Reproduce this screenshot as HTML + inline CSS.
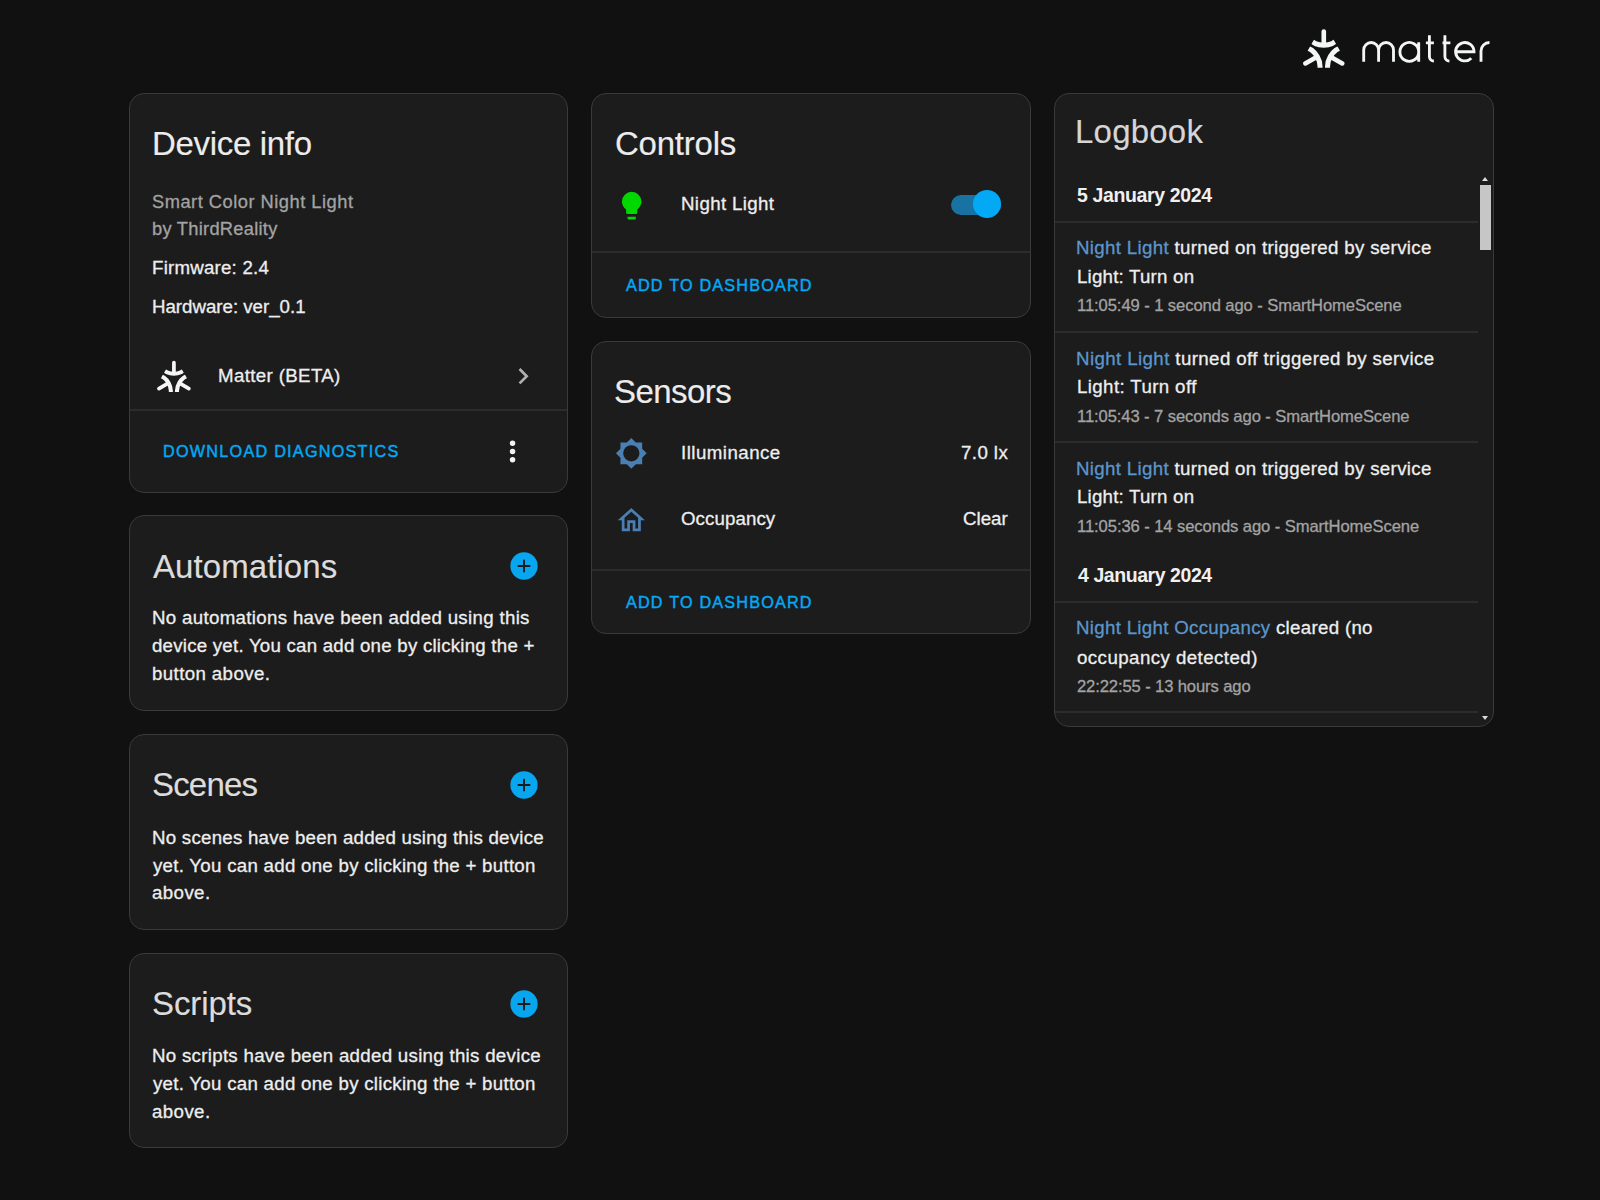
<!DOCTYPE html>
<html><head><meta charset="utf-8"><style>
html,body{margin:0;padding:0;width:1600px;height:1200px;overflow:hidden;background:#111111;}
body{position:relative;font-family:"Liberation Sans",sans-serif;}
.card{position:absolute;box-sizing:border-box;background:#1c1c1c;border:1px solid #3a3a3a;border-radius:15px;}
.t{position:absolute;white-space:nowrap;line-height:1;}
</style></head><body>
<div class="card" style="left:129px;top:93px;width:439px;height:400px"></div>
<div class="card" style="left:129px;top:515px;width:439px;height:196px"></div>
<div class="card" style="left:129px;top:734px;width:439px;height:196px"></div>
<div class="card" style="left:129px;top:953px;width:439px;height:195px"></div>
<div class="card" style="left:591px;top:93px;width:440px;height:225px"></div>
<div class="card" style="left:591px;top:341px;width:440px;height:293px"></div>
<div class="card" style="left:1054px;top:93px;width:440px;height:634px"></div>
<div style="position:absolute;left:130.0px;top:409.0px;width:437.0px;height:2px;background:#2c2c2c"></div>
<div style="position:absolute;left:592.0px;top:251.0px;width:438.0px;height:2px;background:#2c2c2c"></div>
<div style="position:absolute;left:592.0px;top:568.5px;width:438.0px;height:2px;background:#2c2c2c"></div>
<div style="position:absolute;left:1055.0px;top:221.0px;width:423.0px;height:2px;background:#2c2c2c"></div>
<div style="position:absolute;left:1055.0px;top:331.0px;width:423.0px;height:2px;background:#2c2c2c"></div>
<div style="position:absolute;left:1055.0px;top:441.0px;width:423.0px;height:2px;background:#2c2c2c"></div>
<div style="position:absolute;left:1055.0px;top:600.8px;width:423.0px;height:2px;background:#2c2c2c"></div>
<div style="position:absolute;left:1055.0px;top:710.5px;width:423.0px;height:2px;background:#2c2c2c"></div>
<div style="position:absolute;left:1480px;top:185px;width:11px;height:65px;background:#c6c6c6"></div>
<div style="position:absolute;left:1482px;top:176.5px;width:0;height:0;border-left:3px solid transparent;border-right:3px solid transparent;border-bottom:4px solid #dcdcdc"></div>
<div style="position:absolute;left:1482px;top:716px;width:0;height:0;border-left:3px solid transparent;border-right:3px solid transparent;border-top:4px solid #dcdcdc"></div>
<svg style="position:absolute;left:614.72px;top:189.07px;width:33.36px;height:33.36px" viewBox="0 0 24 24"><path fill="#00d800" fill-rule="evenodd" d="M12,2A7,7 0 0,0 5,9C5,11.38 6.19,13.47 8,14.74V17A1,1 0 0,0 9,18H15A1,1 0 0,0 16,17V14.74C17.81,13.47 19,11.38 19,9A7,7 0 0,0 12,2M9,21A1,1 0 0,0 10,22H14A1,1 0 0,0 15,21V20H9V21Z"/></svg>
<svg style="position:absolute;left:615.08px;top:437.38px;width:32.64px;height:32.64px" viewBox="0 0 24 24"><path fill="#4a7fb3" fill-rule="evenodd" d="M20,8.69V4H15.31L12,0.69L8.69,4H4V8.69L0.69,12L4,15.31V20H8.69L12,23.31L15.31,20H20V15.31L23.31,12L20,8.69ZM12,18A6,6 0 0,1 6,12A6,6 0 0,1 12,6A6,6 0 0,1 18,12A6,6 0 0,1 12,18Z"/></svg>
<svg style="position:absolute;left:614.93px;top:504.11px;width:32.64px;height:32.64px" viewBox="0 0 24 24"><path fill="#4a7fb3" fill-rule="evenodd" d="M12 5.69L17 10.19V18H15V12H9V18H7V10.19L12 5.69M12 3L2 12H5V20H11V14H13V20H19V12H22L12 3Z"/></svg>
<svg style="position:absolute;left:508.60px;top:550.50px;width:30px;height:30px" viewBox="-15 -15 30 30"><circle r="13.65" fill="#07a6ee"/><path d="M-5.6,0 H5.6 M0,-5.6 V5.6" stroke="#1c1c1c" stroke-width="1.9" stroke-linecap="round"/></svg>
<svg style="position:absolute;left:508.60px;top:769.80px;width:30px;height:30px" viewBox="-15 -15 30 30"><circle r="13.65" fill="#07a6ee"/><path d="M-5.6,0 H5.6 M0,-5.6 V5.6" stroke="#1c1c1c" stroke-width="1.9" stroke-linecap="round"/></svg>
<svg style="position:absolute;left:508.60px;top:988.50px;width:30px;height:30px" viewBox="-15 -15 30 30"><circle r="13.65" fill="#07a6ee"/><path d="M-5.6,0 H5.6 M0,-5.6 V5.6" stroke="#1c1c1c" stroke-width="1.9" stroke-linecap="round"/></svg>
<svg style="position:absolute;left:495.94px;top:434.64px;width:33.12px;height:33.12px" viewBox="0 0 24 24"><path fill="#f2f2f2" fill-rule="evenodd" d="M12,16A2,2 0 0,1 14,18A2,2 0 0,1 12,20A2,2 0 0,1 10,18A2,2 0 0,1 12,16M12,10A2,2 0 0,1 14,12A2,2 0 0,1 12,14A2,2 0 0,1 10,12A2,2 0 0,1 12,10M12,4A2,2 0 0,1 14,6A2,2 0 0,1 12,8A2,2 0 0,1 10,6A2,2 0 0,1 12,4Z"/></svg>
<svg style="position:absolute;left:507.00px;top:360.00px;width:32.40px;height:32.40px" viewBox="0 0 24 24"><path fill="#b0b0b0" fill-rule="evenodd" d="M8.59,16.58L13.17,12L8.59,7.41L10,6L16,12L10,18L8.59,16.58Z"/></svg>
<div style="position:absolute;left:950.5px;top:194.5px;width:50px;height:20px;border-radius:10px;background:#1873a3"></div>
<div style="position:absolute;left:973px;top:190px;width:28px;height:28px;border-radius:14px;background:#03a9f4"></div>
<svg style="position:absolute;left:1292.72px;top:21.52px;width:61.57px;height:61.57px;overflow:visible" viewBox="-30 -30 60 60"><defs><clipPath id="mca" clipPathUnits="userSpaceOnUse"><path d="M-16.9,0 L0,-29.2 L16.9,0 Z"/></clipPath></defs><g fill="none" stroke="#f4f6f6"><g transform="rotate(0)"><path d="M0,-20.8 V-9" stroke-width="4.5" stroke-linecap="round"/><path clip-path="url(#mca)" d="M-15,-14.3 A19.65,19.65 0 0 0 15,-14.3" stroke-width="4.9"/></g><g transform="rotate(120)"><path d="M0,-20.8 V-9" stroke-width="4.5" stroke-linecap="round"/><path clip-path="url(#mca)" d="M-15,-14.3 A19.65,19.65 0 0 0 15,-14.3" stroke-width="4.9"/></g><g transform="rotate(240)"><path d="M0,-20.8 V-9" stroke-width="4.5" stroke-linecap="round"/><path clip-path="url(#mca)" d="M-15,-14.3 A19.65,19.65 0 0 0 15,-14.3" stroke-width="4.9"/></g></g></svg>
<svg style="position:absolute;left:149.09px;top:354.99px;width:49.83px;height:49.83px;overflow:visible" viewBox="-30 -30 60 60"><defs><clipPath id="mcb" clipPathUnits="userSpaceOnUse"><path d="M-16.9,0 L0,-29.2 L16.9,0 Z"/></clipPath></defs><g fill="none" stroke="#f4f6f6"><g transform="rotate(0)"><path d="M0,-20.8 V-9" stroke-width="4.5" stroke-linecap="round"/><path clip-path="url(#mcb)" d="M-15,-14.3 A19.65,19.65 0 0 0 15,-14.3" stroke-width="4.9"/></g><g transform="rotate(120)"><path d="M0,-20.8 V-9" stroke-width="4.5" stroke-linecap="round"/><path clip-path="url(#mcb)" d="M-15,-14.3 A19.65,19.65 0 0 0 15,-14.3" stroke-width="4.9"/></g><g transform="rotate(240)"><path d="M0,-20.8 V-9" stroke-width="4.5" stroke-linecap="round"/><path clip-path="url(#mcb)" d="M-15,-14.3 A19.65,19.65 0 0 0 15,-14.3" stroke-width="4.9"/></g></g></svg>
<svg style="position:absolute;left:0;top:0;width:1600px;height:100px;overflow:visible" viewBox="0 0 1600 100"><path d="M1363.7,61.8 V50 A7.45,7.45 0 0 1 1378.6,50 V61.8 M1378.6,50 A7.45,7.45 0 0 1 1393.5,50 V61.8 M1418.7,42.3 V61.8 M1418.7,51.9 A9.4,9.4 0 1 0 1418.7,51.95 M1429.4,35.3 V56.5 A4.5,4.5 0 0 0 1433.9,61 M1425.9,42.9 H1433.9 M1444.9,35.3 V56.5 A4.5,4.5 0 0 0 1449.4,61 M1442.5,42.9 H1450.4 M1455.6,51.7 H1474 A9.2,9.2 0 1 0 1471.3,58.2 M1481,61.8 V51 A8.5,8.5 0 0 1 1489.5,42.5" fill="none" stroke="#f4f6f6" stroke-width="2.85"/></svg>
<div id="t_devinfo" class="t" style="left:152.00px;top:126.52px;font-size:33.00px;letter-spacing:-0.320px;color:#ececec;-webkit-text-stroke:0.15px;">Device info</div>
<div id="t_model1" class="t" style="left:152.00px;top:193.06px;font-size:18.30px;letter-spacing:0.500px;color:#a3a3a3;-webkit-text-stroke:0.30px;">Smart Color Night Light</div>
<div id="t_model2" class="t" style="left:152.00px;top:220.06px;font-size:18.30px;letter-spacing:0.268px;color:#a3a3a3;-webkit-text-stroke:0.30px;">by ThirdReality</div>
<div id="t_fw" class="t" style="left:152.00px;top:259.07px;font-size:18.70px;letter-spacing:0.217px;color:#eeeeee;-webkit-text-stroke:0.30px;">Firmware: 2.4</div>
<div id="t_hw" class="t" style="left:152.00px;top:297.67px;font-size:18.70px;letter-spacing:-0.012px;color:#eeeeee;-webkit-text-stroke:0.30px;">Hardware: ver_0.1</div>
<div id="t_matter" class="t" style="left:218.00px;top:367.17px;font-size:18.70px;letter-spacing:0.358px;color:#eeeeee;-webkit-text-stroke:0.30px;">Matter (BETA)</div>
<div id="t_dl" class="t" style="left:163.00px;top:443.09px;font-size:16.20px;letter-spacing:1.258px;color:#03a9f4;-webkit-text-stroke:0.45px #03a9f4;">DOWNLOAD DIAGNOSTICS</div>
<div id="t_auto" class="t" style="left:153.00px;top:549.57px;font-size:33.00px;letter-spacing:0.070px;color:#dcdcdc;-webkit-text-stroke:0.15px;">Automations</div>
<div id="t_auto1" class="t" style="left:152.00px;top:608.67px;font-size:18.70px;letter-spacing:0.320px;color:#eeeeee;-webkit-text-stroke:0.30px;">No automations have been added using this</div>
<div id="t_auto2" class="t" style="left:152.00px;top:637.47px;font-size:18.70px;letter-spacing:0.225px;color:#eeeeee;-webkit-text-stroke:0.30px;">device yet. You can add one by clicking the +</div>
<div id="t_auto3" class="t" style="left:152.00px;top:664.77px;font-size:18.70px;letter-spacing:0.383px;color:#eeeeee;-webkit-text-stroke:0.30px;">button above.</div>
<div id="t_scenes" class="t" style="left:152.00px;top:767.77px;font-size:33.00px;letter-spacing:-0.820px;color:#dcdcdc;-webkit-text-stroke:0.15px;">Scenes</div>
<div id="t_sc1" class="t" style="left:152.00px;top:828.77px;font-size:18.70px;letter-spacing:0.248px;color:#eeeeee;-webkit-text-stroke:0.30px;">No scenes have been added using this device</div>
<div id="t_sc2" class="t" style="left:153.00px;top:857.07px;font-size:18.70px;letter-spacing:0.273px;color:#eeeeee;-webkit-text-stroke:0.30px;">yet. You can add one by clicking the + button</div>
<div id="t_sc3" class="t" style="left:152.00px;top:884.47px;font-size:18.70px;letter-spacing:0.400px;color:#eeeeee;-webkit-text-stroke:0.30px;">above.</div>
<div id="t_scripts" class="t" style="left:152.00px;top:987.37px;font-size:33.00px;letter-spacing:-0.100px;color:#dcdcdc;-webkit-text-stroke:0.15px;">Scripts</div>
<div id="t_sr1" class="t" style="left:152.00px;top:1047.37px;font-size:18.70px;letter-spacing:0.293px;color:#eeeeee;-webkit-text-stroke:0.30px;">No scripts have been added using this device</div>
<div id="t_sr2" class="t" style="left:153.00px;top:1075.27px;font-size:18.70px;letter-spacing:0.273px;color:#eeeeee;-webkit-text-stroke:0.30px;">yet. You can add one by clicking the + button</div>
<div id="t_sr3" class="t" style="left:152.00px;top:1102.57px;font-size:18.70px;letter-spacing:0.400px;color:#eeeeee;-webkit-text-stroke:0.30px;">above.</div>
<div id="t_controls" class="t" style="left:615.00px;top:127.47px;font-size:33.00px;letter-spacing:-0.229px;color:#ececec;-webkit-text-stroke:0.15px;">Controls</div>
<div id="t_nl" class="t" style="left:681.00px;top:195.17px;font-size:18.70px;letter-spacing:0.370px;color:#eeeeee;-webkit-text-stroke:0.30px;">Night Light</div>
<div id="t_add1" class="t" style="left:626.00px;top:277.29px;font-size:16.20px;letter-spacing:1.193px;color:#03a9f4;-webkit-text-stroke:0.45px #03a9f4;">ADD TO DASHBOARD</div>
<div id="t_sensors" class="t" style="left:614.00px;top:374.87px;font-size:33.00px;letter-spacing:-0.567px;color:#ececec;-webkit-text-stroke:0.15px;">Sensors</div>
<div id="t_illum" class="t" style="left:681.00px;top:443.67px;font-size:18.70px;letter-spacing:0.470px;color:#eeeeee;-webkit-text-stroke:0.30px;">Illuminance</div>
<div id="t_illumv" class="t" style="left:961.00px;top:443.67px;font-size:18.70px;letter-spacing:0.420px;color:#eeeeee;-webkit-text-stroke:0.30px;">7.0 lx</div>
<div id="t_occ" class="t" style="left:681.00px;top:509.67px;font-size:18.70px;letter-spacing:0.087px;color:#eeeeee;-webkit-text-stroke:0.30px;">Occupancy</div>
<div id="t_occv" class="t" style="left:963.00px;top:509.67px;font-size:18.70px;letter-spacing:0.000px;color:#eeeeee;-webkit-text-stroke:0.30px;">Clear</div>
<div id="t_add2" class="t" style="left:626.00px;top:594.29px;font-size:16.20px;letter-spacing:1.193px;color:#03a9f4;-webkit-text-stroke:0.45px #03a9f4;">ADD TO DASHBOARD</div>
<div id="t_logbook" class="t" style="left:1075.00px;top:115.47px;font-size:33.00px;letter-spacing:0.217px;color:#d6d6d6;-webkit-text-stroke:0.15px;">Logbook</div>
<div id="t_d1" class="t" style="left:1077.00px;top:185.99px;font-size:19.50px;letter-spacing:-0.362px;color:#f0f0f0;font-weight:700;">5 January 2024</div>
<div id="t_e1a" class="t" style="left:1076.00px;top:239.17px;font-size:18.70px;letter-spacing:0.332px;color:#eeeeee;-webkit-text-stroke:0.30px;"><span style="color:#5b96cc">Night Light</span> turned on triggered by service</div>
<div id="t_e1b" class="t" style="left:1077.00px;top:268.17px;font-size:18.70px;letter-spacing:0.215px;color:#eeeeee;-webkit-text-stroke:0.30px;">Light: Turn on</div>
<div id="t_e1c" class="t" style="left:1077.00px;top:297.55px;font-size:16.60px;letter-spacing:-0.087px;color:#a3a3a3;-webkit-text-stroke:0.30px;">11:05:49 - 1 second ago - SmartHomeScene</div>
<div id="t_e2a" class="t" style="left:1076.00px;top:350.17px;font-size:18.70px;letter-spacing:0.398px;color:#eeeeee;-webkit-text-stroke:0.30px;"><span style="color:#5b96cc">Night Light</span> turned off triggered by service</div>
<div id="t_e2b" class="t" style="left:1077.00px;top:377.87px;font-size:18.70px;letter-spacing:0.386px;color:#eeeeee;-webkit-text-stroke:0.30px;">Light: Turn off</div>
<div id="t_e2c" class="t" style="left:1077.00px;top:408.55px;font-size:16.60px;letter-spacing:-0.095px;color:#a3a3a3;-webkit-text-stroke:0.30px;">11:05:43 - 7 seconds ago - SmartHomeScene</div>
<div id="t_e3a" class="t" style="left:1076.00px;top:459.57px;font-size:18.70px;letter-spacing:0.332px;color:#eeeeee;-webkit-text-stroke:0.30px;"><span style="color:#5b96cc">Night Light</span> turned on triggered by service</div>
<div id="t_e3b" class="t" style="left:1077.00px;top:488.37px;font-size:18.70px;letter-spacing:0.215px;color:#eeeeee;-webkit-text-stroke:0.30px;">Light: Turn on</div>
<div id="t_e3c" class="t" style="left:1077.00px;top:518.55px;font-size:16.60px;letter-spacing:-0.083px;color:#a3a3a3;-webkit-text-stroke:0.30px;">11:05:36 - 14 seconds ago - SmartHomeScene</div>
<div id="t_d2" class="t" style="left:1078.00px;top:565.69px;font-size:19.50px;letter-spacing:-0.438px;color:#f0f0f0;font-weight:700;">4 January 2024</div>
<div id="t_e4a" class="t" style="left:1076.00px;top:619.37px;font-size:18.70px;letter-spacing:0.306px;color:#eeeeee;-webkit-text-stroke:0.30px;"><span style="color:#5b96cc">Night Light Occupancy</span> cleared (no</div>
<div id="t_e4b" class="t" style="left:1077.00px;top:648.57px;font-size:18.70px;letter-spacing:0.439px;color:#eeeeee;-webkit-text-stroke:0.30px;">occupancy detected)</div>
<div id="t_e4c" class="t" style="left:1077.00px;top:678.75px;font-size:16.60px;letter-spacing:-0.118px;color:#a3a3a3;-webkit-text-stroke:0.30px;">22:22:55 - 13 hours ago</div>
</body></html>
